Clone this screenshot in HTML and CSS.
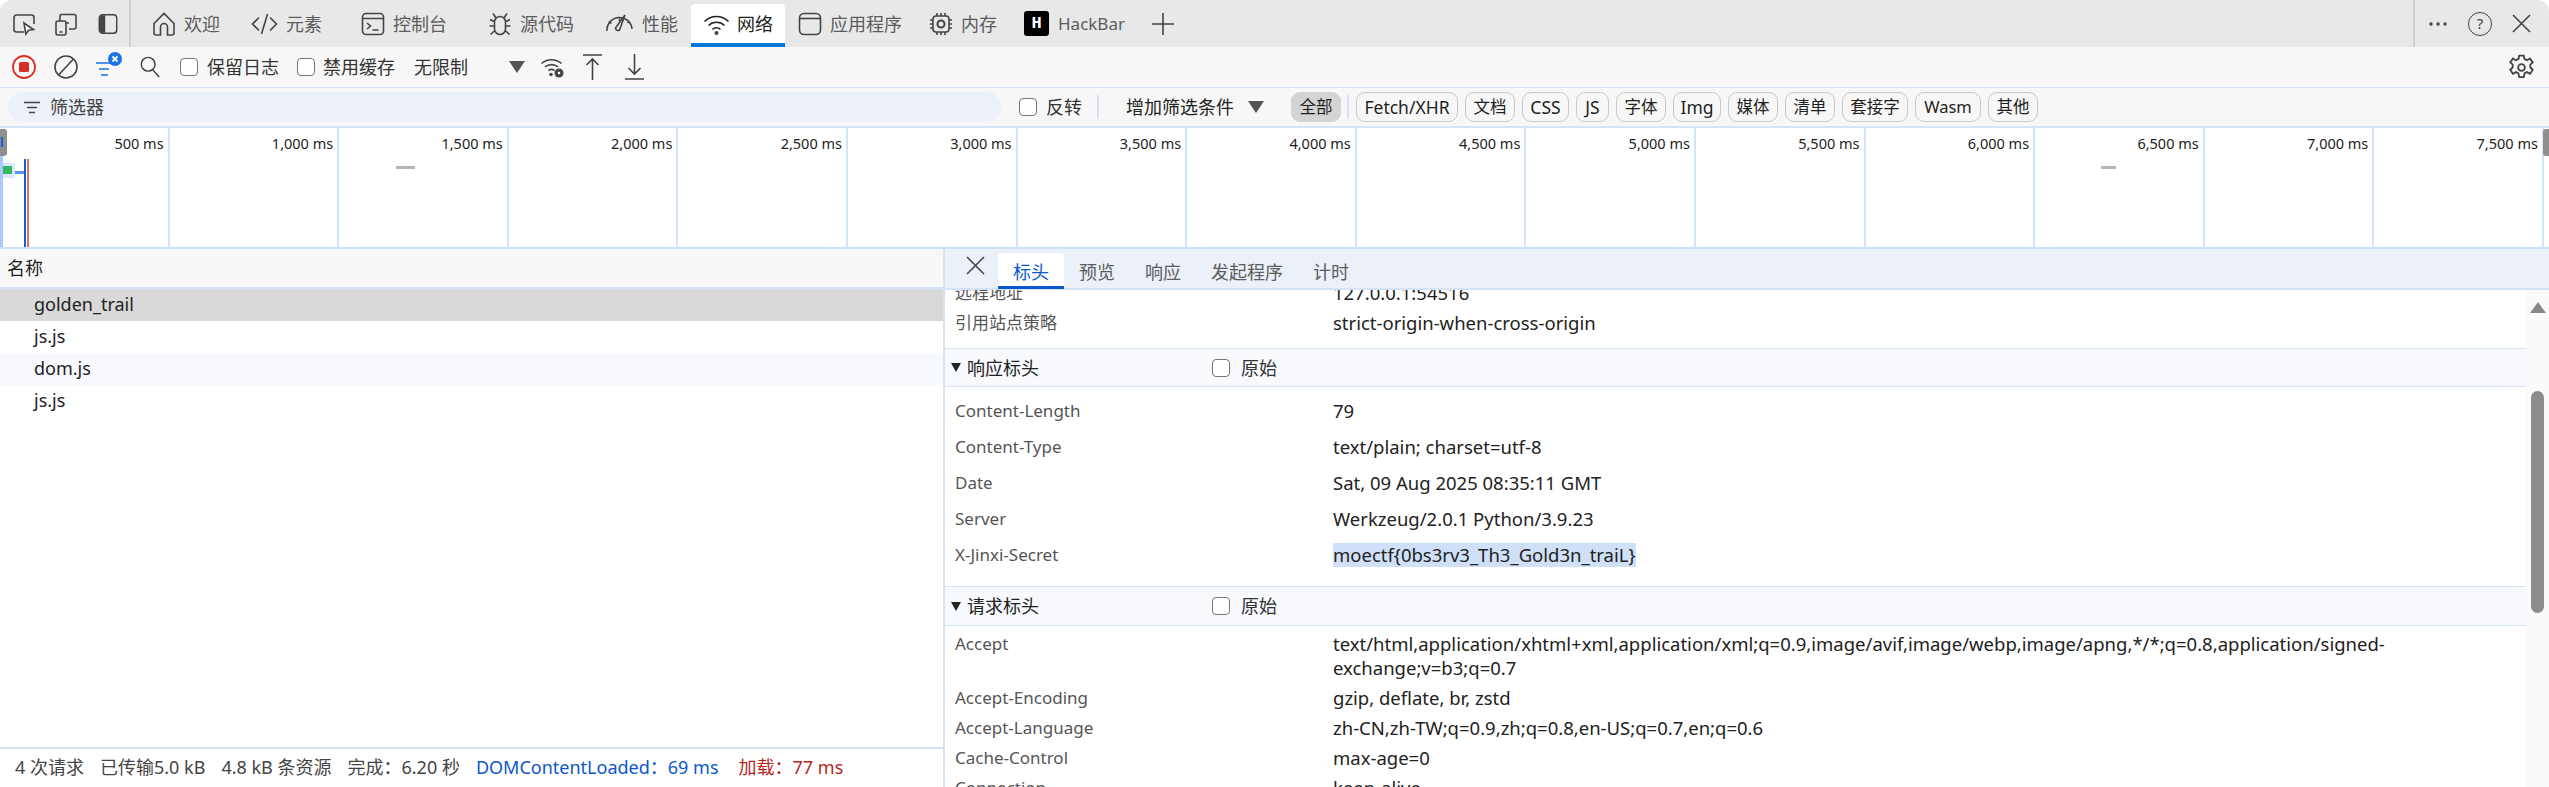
FILE: index.html
```html
<!DOCTYPE html>
<html lang="zh-CN">
<head>
<meta charset="utf-8">
<title>DevTools Network</title>
<link rel="stylesheet" href="styles.css">
</head>
<body>
<div class="app">
  <header class="tabbar">
    <div class="tool-group">
      <svg class="ic24" viewBox="0 0 24 24"><path d="M12 20H4.500A2.500 2.500 0 0 1 2 17.500V5.500A2.500 2.500 0 0 1 4.500 3h15A2.500 2.500 0 0 1 22 5.500V12"/><path d="M12 11l1.800 11 2.800-3.800 4.900-.7z" fill="#fff"/></svg>
      <svg class="ic24" viewBox="0 0 24 24"><rect x="2" y="9" width="10" height="14" rx="2"/><path d="M6 2.500h14a2 2 0 0 1 2 2V15a2 2 0 0 1-2 2h-5M6 9V4.500a2 2 0 0 1 .5-1.500M5.500 20h3M15 11h-4"/></svg>
      <svg class="ic24 side" viewBox="0 0 24 24"><rect x="2.500" y="2" width="19" height="20" rx="3.500"/><path class="solid" d="M6 2.500h3v19H6a3 3 0 0 1-3-3v-13a3 3 0 0 1 3-3z"/></svg>
    </div>
    <nav class="tabs">
      <div class="tab">
        <svg class="ic24" viewBox="0 0 24 24"><path d="M2 11.500 12 1.500l10 10V21a2 2 0 0 1-2 2h-4.500v-8a3.500 3.500 0 0 0-7 0v8H4a2 2 0 0 1-2-2z"/></svg><span>欢迎</span>
      </div>
      <div class="tab gap-s">
        <svg class="ic27" viewBox="0 0 27 24"><path d="M8 5.500 1.500 12 8 18.500M19 5.500l6.500 6.500-6.500 6.500M16.500 2l-6 20"/></svg><span>元素</span>
      </div>
      <div class="tab gap-l">
        <svg class="ic24" viewBox="0 0 24 24"><rect x="1.500" y="1.500" width="21" height="21" rx="3.500"/><path d="M2 6.500h20M6 11l3.500 3L6 17M11.500 18h6"/></svg><span>控制台</span>
      </div>
      <div class="tab gap-b">
        <svg class="ic24" viewBox="0 0 24 24"><path d="M6.500 10a5.500 5.500 0 0 1 11 0v7a5.500 5.500 0 0 1-11 0zM8 6 5 1.500M16 6l3-4.500M7 10 2 7.500M17 10l5-2.500M7 14H1.500M17 14h5.500M7.500 18 2.500 22.500M16.500 18l5 4.500"/></svg><span>源代码</span>
      </div>
      <div class="tab gap-s">
        <svg class="ic29" viewBox="0 0 29 24"><path d="M2 19a12.500 12.500 0 0 1 25-2M4 9.500l2.500 2M14.500 6.500v3M24.500 9l-2 2"/><path d="M20 3 14.500 18a2.500 2.500 0 0 1-4-2z"/></svg><span>性能</span>
      </div>
      <div class="tab active">
        <svg class="ic27 dark" viewBox="0 0 27 24"><path d="M1.500 9.500a17 17 0 0 1 24 0M5.500 13.500a11.500 11.500 0 0 1 16 0M9.500 17.500a5.500 5.500 0 0 1 8 0"/><circle class="solid" cx="13.500" cy="21" r="2"/></svg><span>网络</span>
      </div>
      <div class="tab gap-n">
        <svg class="ic24" viewBox="0 0 24 24"><rect x="1.500" y="1.500" width="21" height="21" rx="4.500"/><path d="M2 6.500h20"/></svg><span>应用程序</span>
      </div>
      <div class="tab gap-z">
        <svg class="ic24" viewBox="0 0 24 24"><rect x="4" y="4" width="16" height="16" rx="3"/><circle cx="12" cy="12" r="3.500" stroke-width="2"/><path d="M8 1v3M12 1v3M16 1v3M8 20v3M12 20v3M16 20v3M1 8h3M1 12h3M1 16h3M20 8h3M20 12h3M20 16h3"/></svg><span>内存</span>
      </div>
      <div class="tab gap-h">
        <span class="hb-logo">H</span><span class="hb-text">HackBar</span>
      </div>
      <svg class="ic22 plus" viewBox="0 0 22 22"><path d="M11 0v22M0 11h22"/></svg>
    </nav>
    <div class="tool-group right">
      <svg class="ic20" viewBox="0 0 20 6"><circle class="solid" cx="3" cy="3" r="1.700"/><circle class="solid" cx="10" cy="3" r="1.700"/><circle class="solid" cx="17" cy="3" r="1.700"/></svg>
      <span class="help">?</span>
      <svg class="ic19" viewBox="0 0 19 19"><path d="M1 1l17 17M18 1 1 18"/></svg>
    </div>
  </header>

  <section class="toolbar">
    <svg class="ic24 rec" viewBox="0 0 24 24"><circle cx="12" cy="12" r="11"/><rect x="7" y="7" width="10" height="10" rx="1.500"/></svg>
    <svg class="ic24 clear" viewBox="0 0 24 24"><circle cx="12" cy="12" r="11"/><path d="M4.500 20 19.500 4"/></svg>
    <svg class="ic27 filt" viewBox="0 0 27 26"><path d="M1 11h14M4 17h10M6 23h7"/><circle cx="20" cy="7" r="7" fill="#1a73e8" stroke="none"/><path class="x" d="M17.500 4.500l5 5M22.500 4.500l-5 5"/></svg>
    <svg class="ic22 srch" viewBox="0 0 22 24"><circle cx="9" cy="9" r="7.500"/><path d="M14 15l7 8"/></svg>
    <label class="chk first"><input type="checkbox" class="check"><span>保留日志</span></label>
    <label class="chk second"><input type="checkbox" class="check"><span>禁用缓存</span></label>
    <span class="throttle">无限制</span>
    <span class="tri big throttle-tri"></span>
    <svg class="ic25 wifi-gear" viewBox="0 0 25 24"><path d="M1.500 8.500a15 15 0 0 1 20 0M5 12a10 10 0 0 1 13 0M8.500 15.500a5 5 0 0 1 6 0"/><circle class="solid" cx="11" cy="19.500" r="1.800"/><circle class="solid" cx="19" cy="18" r="4.500"/><circle cx="19" cy="18" r="1.300" fill="#fff" stroke="none"/></svg>
    <svg class="ic19 up" viewBox="0 0 19 26"><path d="M0 1h19M9.500 26V5M3.500 11l6-6 6 6"/></svg>
    <svg class="ic19 down" viewBox="0 0 19 26"><path d="M9.500 0v20M3.500 14l6 6 6-6M0 25h19"/></svg>
    <svg class="gear" viewBox="0 0 24 24"><path d="M10 1.500h4l.7 3 2.200 1 2.700-1.600 2.400 3.600-2.200 2 .1 2.500 2.100 2-2.300 3.600-2.800-1.500-2.100 1-.8 3.400h-4l-.8-3.300-2.100-1.100-2.800 1.500-2.300-3.600 2.100-2 .1-2.500-2.200-2 2.400-3.600 2.700 1.600 2.200-1z"/><circle cx="12" cy="12" r="3"/></svg>
  </section>

  <section class="filterbar">
    <div class="filter-input">
      <svg class="ic16" viewBox="0 0 16 13"><path d="M0 1.500h16M3 6.500h10M5 11.500h6"/></svg>
      <span>筛选器</span>
    </div>
    <label class="chk invert"><input type="checkbox" class="check"><span>反转</span></label>
    <span class="vsep sep-a"></span>
    <span class="more">增加筛选条件</span>
    <span class="tri big more-tri"></span>
    <span class="pill on">全部</span>
    <span class="vsep sep-b"></span>
    <span class="pill fetch">Fetch/XHR</span>
    <span class="pill">文档</span>
    <span class="pill css">CSS</span>
    <span class="pill js">JS</span>
    <span class="pill">字体</span>
    <span class="pill img">Img</span>
    <span class="pill">媒体</span>
    <span class="pill">清单</span>
    <span class="pill wide">套接字</span>
    <span class="pill wide">Wasm</span>
    <span class="pill">其他</span>
  </section>

  <section class="timeline">
    <div class="tcol">500 ms</div><div class="tcol">1,000 ms</div><div class="tcol">1,500 ms</div>
    <div class="tcol">2,000 ms</div><div class="tcol">2,500 ms</div><div class="tcol">3,000 ms</div>
    <div class="tcol">3,500 ms</div><div class="tcol">4,000 ms</div><div class="tcol">4,500 ms</div>
    <div class="tcol">5,000 ms</div><div class="tcol">5,500 ms</div><div class="tcol">6,000 ms</div>
    <div class="tcol">6,500 ms</div><div class="tcol">7,000 ms</div><div class="tcol">7,500 ms</div>
    <i class="mark strip"></i>
    <i class="mark handle"></i>
    <i class="mark handle-line"></i>
    <i class="mark glow"></i>
    <i class="mark green"></i>
    <i class="mark bar"></i>
    <i class="mark vblue"></i>
    <i class="mark vred"></i>
    <i class="mark dash1"></i>
    <i class="mark dash2"></i>
    <i class="mark handle-r"></i>
  </section>

  <main class="split">
    <section class="left">
      <div class="list-head">名称</div>
      <div class="rows">
        <div class="row sel">golden_trail</div>
        <div class="row">js.js</div>
        <div class="row alt">dom.js</div>
        <div class="row">js.js</div>
      </div>
      <footer class="status">
        <span class="s1">4 次请求</span>
        <span class="s2">已传输5.0 kB</span>
        <span class="s3">4.8 kB 条资源</span>
        <span class="s4">完成：6.20 秒</span>
        <span class="s5">DOMContentLoaded：69 ms</span>
        <span class="s6">加载：77 ms</span>
      </footer>
    </section>

    <section class="right-pane">
      <div class="detail-tabs">
        <svg class="ic19 close" viewBox="0 0 19 19"><path d="M1 1l17 17M18 1 1 18"/></svg>
        <span class="dtab on">标头</span>
        <span class="dtab">预览</span>
        <span class="dtab">响应</span>
        <span class="dtab">发起程序</span>
        <span class="dtab">计时</span>
      </div>
      <div class="detail-body">
        <div class="detail-scroll">
          <div class="kv top"><span class="k">远程地址</span><span class="v">127.0.0.1:54516</span></div>
          <div class="kv top"><span class="k">引用站点策略</span><span class="v">strict-origin-when-cross-origin</span></div>

          <div class="sec-head first-sec"><span class="tri"></span><span class="sec-title">响应标头</span><label class="chk raw"><input type="checkbox" class="check"><span>原始</span></label></div>
          <div class="kv res"><span class="k">Content-Length</span><span class="v">79</span></div>
          <div class="kv res"><span class="k">Content-Type</span><span class="v">text/plain; charset=utf-8</span></div>
          <div class="kv res"><span class="k">Date</span><span class="v">Sat, 09 Aug 2025 08:35:11 GMT</span></div>
          <div class="kv res"><span class="k">Server</span><span class="v">Werkzeug/2.0.1 Python/3.9.23</span></div>
          <div class="kv res last"><span class="k">X-Jinxi-Secret</span><span class="v"><span class="hl">moectf{0bs3rv3_Th3_Gold3n_traiL}</span></span></div>

          <div class="sec-head"><span class="tri"></span><span class="sec-title">请求标头</span><label class="chk raw"><input type="checkbox" class="check"><span>原始</span></label></div>
          <div class="kv req"><span class="k">Accept</span><span class="v">text/html,application/xhtml+xml,application/xml;q=0.9,image/avif,image/webp,image/apng,*/*;q=0.8,application/signed-exchange;v=b3;q=0.7</span></div>
          <div class="kv req"><span class="k">Accept-Encoding</span><span class="v">gzip, deflate, br, zstd</span></div>
          <div class="kv req"><span class="k">Accept-Language</span><span class="v">zh-CN,zh-TW;q=0.9,zh;q=0.8,en-US;q=0.7,en;q=0.6</span></div>
          <div class="kv req"><span class="k">Cache-Control</span><span class="v">max-age=0</span></div>
          <div class="kv req"><span class="k">Connection</span><span class="v">keep-alive</span></div>
        </div>
        <div class="vscroll">
          <span class="sc-up"></span>
          <span class="sc-thumb"></span>
        </div>
      </div>
    </section>
  </main>
</div>
</body>
</html>
```

FILE: styles.css
```css
* { box-sizing: border-box; }
html, body { margin: 0; height: 100%; overflow: hidden; background: #fff; }
body { font: 17px/24px "Noto Sans", "Noto Sans CJK SC", sans-serif; color: #222; }
.app { width: 2549px; height: 787px; display: flex; flex-direction: column; overflow: hidden; border-radius: 12px 12px 0 12px; background: #fff; }
svg { display: block; flex: none; fill: none; stroke: #444; stroke-width: 1.6; }
svg .solid { fill: currentColor; stroke: none; color: #444; }
.ic16 { width: 16px; height: 13px; }
.ic19 { width: 19px; height: 19px; }
.ic20 { width: 20px; height: 6px; }
.ic22 { width: 22px; height: 22px; }
.ic24 { width: 24px; height: 24px; }
.ic25 { width: 25px; height: 24px; }
.ic27 { width: 27px; height: 24px; }
.ic29 { width: 29px; height: 24px; }

/* top tabs */
.tabbar { height: 47px; background: #e8e8e8; display: flex; align-items: stretch; flex: none; }
.tool-group { display: flex; align-items: center; gap: 18px; padding-left: 12px; width: 131px; border-right: 2px solid #cfcfd4; }
.tool-group .side { margin-left: 1px; width: 22px; }
.tabs { display: flex; align-items: stretch; flex: 1; padding-left: 9px; }
.tab { display: flex; align-items: center; gap: 8px; padding: 0 12px; color: #5c5c5c; font-size: 18px; }
.gap-s { margin-left: 7px; }
.gap-l { margin-left: 15px; }
.gap-b { margin-left: 17px; }
.gap-n { margin-left: 1px; }
.gap-z { margin-left: 3px; }
.gap-h { margin-left: 3px; }
.tab.active { margin-top: 4px; margin-left: 1px; gap: 7px; background: #fff; color: #1f1f1f; border-radius: 4px 4px 0 0; border-bottom: 4px solid #0078d4; }
.dark { stroke: #222; }
.hb-logo { width: 25px; height: 25px; border-radius: 3px; background: #000; color: #fff; font: bold 17px/25px "Liberation Mono", monospace; text-align: center; }
.hb-text { margin-left: 1px; font-size: 17px; }
.plus { align-self: center; margin-left: 15px; }
.tool-group.right { width: auto; border-right: 0; border-left: 2px solid #cfcfd4; gap: 20px; padding: 0 18px 0 13px; }
.help { width: 24px; height: 24px; border: 1.5px solid #444; border-radius: 50%; font-size: 15px; line-height: 21px; text-align: center; color: #444; }

/* toolbar */
.toolbar { height: 41px; flex: none; background: #f7f7f7; border-bottom: 1px solid #d6e2f6; display: flex; align-items: center; padding-left: 12px; }
.rec circle { stroke: #d93025; stroke-width: 1.8; }
.rec rect { fill: #d93025; stroke: none; }
.clear { margin-left: 18px; }
.filt { margin-left: 17px; stroke: #1a73e8; margin-top: -4px; width: 27px; height: 26px; }
.filt .x { stroke: #fff; stroke-width: 1.8; }
.srch { margin-left: 17px; }
.chk { display: inline-flex; align-items: center; color: #333; }
.check { appearance: none; -webkit-appearance: none; margin: 0; width: 18px; height: 18px; border: 1.5px solid #767676; border-radius: 4px; background: #fff; flex: none; }
.chk.first { margin-left: 19px; gap: 9px; font-size: 18px; }
.chk.second { margin-left: 18px; gap: 8px; font-size: 18px; }
.throttle { margin-left: 19px; font-size: 18px; color: #333; }
.tri { display: inline-block; width: 0; height: 0; border-left: 5px solid transparent; border-right: 5px solid transparent; border-top: 9px solid #222; }
.tri.big { border-left-width: 8px; border-right-width: 8px; border-top: 12px solid #555; }
.throttle-tri { margin-left: 41px; }
.wifi-gear { margin-left: 15px; }
.up { margin-left: 18px; height: 26px; }
.down { margin-left: 23px; height: 26px; }
.gear { width: 27px; height: 27px; margin-left: auto; margin-right: 14px; }

/* filter row */
.filterbar { height: 40px; flex: none; background: #f7f7f7; border-bottom: 2px solid #d6e2f6; display: flex; align-items: center; padding: 0 0 0 8px; }
.filter-input { width: 993px; height: 30px; background: #ebf0f9; border-radius: 15px; display: flex; align-items: center; padding-left: 16px; gap: 10px; font-size: 18px; color: #444; }
.chk.invert { margin-left: 18px; gap: 9px; font-size: 18px; }
.vsep { width: 2px; height: 24px; background: #d6e2f6; }
.sep-a { margin-left: 15px; }
.more { margin-left: 27px; font-size: 18px; color: #222; }
.more-tri { margin-left: 14px; border-top-color: #444; }
.pill { width: 50px; height: 30px; line-height: 28px; text-align: center; border: 1px solid #c9c9c9; border-radius: 9px; font-size: 16.5px; margin-left: 7px; color: #1f1f1f; white-space: nowrap; }
.pill.on { background: #d4d4d4; border-color: #d4d4d4; margin-left: 27px; }
.pill.fetch { width: 102px; font-size: 17.5px; }
.pill.css { width: 47px; font-size: 17.5px; }
.pill.js { width: 33px; font-size: 17.5px; }
.pill.img { width: 48px; font-size: 17.5px; }
.pill.wide { width: 66px; }
.sep-b { margin-left: 6px; }

/* timeline */
.timeline { height: 121px; flex: none; display: flex; position: relative; border-bottom: 2px solid #cfe0fb; background: #fff; overflow: hidden; }
.tcol { width: 169.6px; flex: none; border-right: 2px solid #d3e2fd; text-align: right; padding: 3px 4px 0 0; font-size: 14.5px; color: #222; }
.mark { position: absolute; display: block; }
.strip { left: 0; top: 26px; width: 3px; height: 95px; background: #a9c8fb; }
.handle { left: 0; top: 1px; width: 7px; height: 27px; background: #8f8f8f; border-radius: 0 3px 3px 0; }
.handle-line { left: 1px; top: 9px; width: 2px; height: 10px; background: #1a5fd0; }
.glow { left: 3px; top: 35px; width: 12px; height: 15px; background: #dbe8fb; }
.green { left: 3px; top: 38px; width: 9px; height: 8px; background: #35b864; }
.bar { left: 15px; top: 43px; width: 9px; height: 3px; background: #5b93f0; }
.vblue { left: 24px; top: 31px; width: 2px; height: 90px; background: #1a5fd0; }
.vred { left: 27px; top: 31px; width: 2px; height: 90px; background: #d9776f; }
.dash1 { left: 396px; top: 38px; width: 19px; height: 3px; background: #b5b5b5; }
.dash2 { left: 2101px; top: 38px; width: 15px; height: 3px; background: #b5b5b5; }
.handle-r { right: 0; top: 1px; width: 6px; height: 27px; background: #8f8f8f; border-radius: 3px 0 0 3px; }

/* split */
.split { flex: 1; display: flex; min-height: 0; }
.left { width: 943px; flex: none; display: flex; flex-direction: column; }
.list-head { height: 40px; background: #f7f7f7; border-bottom: 2px solid #d6e2f6; padding: 0 7px; line-height: 38px; font-size: 18px; color: #222; flex: none; }
.rows { flex: 1; }
.row { height: 32px; line-height: 30px; padding-left: 34px; font-size: 18px; color: #222; }
.row.sel { background: #d9d9d9; }
.row.alt { background: #f7f9fe; }
.status { height: 40px; flex: none; border-top: 2px solid #d6e2f6; display: flex; align-items: center; font-size: 18px; color: #444; padding: 0 0 2px 15px; white-space: nowrap; }
.s2, .s3, .s4, .s5 { margin-left: 16px; }
.s5 { color: #0b57d0; }
.s6 { color: #b3261e; margin-left: 20px; }

/* details */
.right-pane { flex: 1; min-width: 0; border-left: 2px solid #d6e2f6; display: flex; flex-direction: column; }
.detail-tabs { height: 41px; flex: none; background: #ebf0f9; border-bottom: 2px solid #d6e2f6; display: flex; align-items: flex-end; padding-left: 21px; }
.close { align-self: center; margin-right: 13px; margin-top: -6px; }
.dtab { height: 36px; line-height: 38px; padding: 0 15px; font-size: 18px; color: #5c5c5c; white-space: nowrap; margin-bottom: -1px; }
.dtab.on { background: #fff; color: #0b57d0; border-radius: 4px 4px 0 0; border-bottom: 3px solid #0b57d0; }
.detail-body { flex: 1; min-height: 0; display: flex; overflow: hidden; }
.detail-scroll { flex: 1; min-width: 0; margin-top: -11px; font-size: 17px; }
.kv { display: grid; grid-template-columns: 378px 1fr; padding: 0 62px 0 10px; line-height: 24px; }
.k { color: #555; font-size: 17px; }
.v { color: #222; font-size: 18.5px; }
.kv.top { height: 30px; padding-top: 2px; }
.kv.top + .sec-head { margin-top: 9px; }
.kv.res { height: 36px; padding-top: 5px; }
.sec-head + .kv.res { margin-top: 7px; }
.sec-head + .kv.req { margin-top: 4px; }
.kv.res.last { height: 48px; }
.kv.req { padding-top: 2px; padding-bottom: 4px; }
.hl { background: #cfe0f8; display: inline-block; }
.sec-head { height: 40px; background: #f7f9fe; border-top: 1.5px solid #d6e2f6; border-bottom: 1.5px solid #d6e2f6; display: flex; align-items: center; padding-left: 6px; font-size: 18px; color: #222; }
.sec-head.first-sec { height: 39px; }
.sec-head .tri { margin-right: 6px; }
.sec-title { width: 245px; }
.chk.raw { gap: 11px; }
.vscroll { width: 23px; flex: none; background: #fafafa; position: relative; }
.sc-up { position: absolute; left: 4px; top: 12px; width: 0; height: 0; border-left: 8px solid transparent; border-right: 8px solid transparent; border-bottom: 11px solid #888; }
.sc-thumb { position: absolute; left: 5px; top: 101px; width: 13px; height: 222px; border-radius: 7px; background: #8c8c8c; }
```
